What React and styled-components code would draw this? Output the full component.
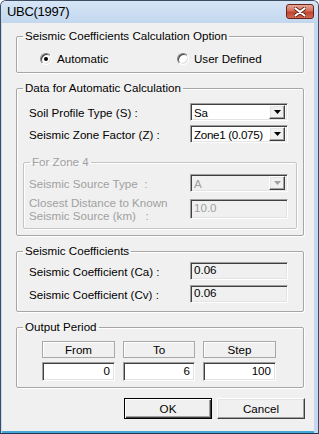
import React from 'react';
import styled, { createGlobalStyle, css } from 'styled-components';

const GlobalStyle = createGlobalStyle`
  body {
    margin: 0;
    font-family: "Liberation Sans", Arial, sans-serif;
    font-size: 11.6px;
    color: #000;
  }
`;

const sunken = css`
  box-sizing: border-box;
  border: 1px solid;
  border-color: #a0a0a0 #ffffff #ffffff #a0a0a0;
  box-shadow: inset 1px 1px 0 #404040, inset -1px -1px 0 #e3e3e3;
`;

const raised = css`
  box-sizing: border-box;
  border: 1px solid;
  border-color: #ffffff #404040 #404040 #ffffff;
  box-shadow: inset -1px -1px 0 #a0a0a0, inset 1px 1px 0 #e3e3e3;
`;

const Window = styled.div`
  box-sizing: border-box;
  width: 319px;
  height: 434px;
  display: flex;
  flex-direction: column;
  background: #c4d8ef;
  border: 1px solid #3d4d62;
  border-radius: 6px 6px 0 0;
  border-bottom-color: #1f3550;
  overflow: hidden;
`;

const TitleBar = styled.div`
  height: 22px;
  display: flex;
  justify-content: space-between;
  background: linear-gradient(#d6e5f6, #c2d7ee);
  padding-left: 6px;
`;

const Title = styled.span`
  font-size: 13px;
  line-height: 22px;
  letter-spacing: -0.3px;
`;

const CloseButton = styled.div`
  box-sizing: border-box;
  width: 28px;
  height: 15px;
  margin: 3px 4px 0 0;
  border: 1px solid #6b2218;
  border-radius: 3px;
  background: linear-gradient(#e6a898 0%, #d4705c 45%, #c0432e 55%, #d06a52 100%);
  display: flex;
  align-items: center;
  justify-content: center;
`;

const Client = styled.div`
  flex: 1;
  margin: 0 4px 0 1px;
  padding: 0 10px 0 14px;
  background: #f0f0f0;
  border-bottom: 2px solid #44a9d9;
  display: flex;
  flex-direction: column;
`;

const Group = styled.fieldset`
  margin: ${p => p.$top}px ${p => p.$side || 0}px ${p => p.$bottom || 0}px;
  padding: 0;
  border: 1px solid ${p => (p.$disabled ? '#c4c4c4' : '#a6a6a6')};
  border-radius: 2px;
  box-shadow: inset 1px 1px 0 #ffffff, 1px 1px 0 #ffffff;
  min-inline-size: 0;
`;

const Legend = styled.legend`
  margin-left: 6px;
  padding: 0 2px;
  line-height: 14px;
  color: ${p => (p.$disabled ? '#a0a0a0' : '#000')};
`;

const RadioRow = styled.div`
  display: grid;
  grid-template-columns: 137px auto;
  padding: 9px 0 6px 23px;
`;

const RadioItem = styled.label`
  display: flex;
  align-items: center;
  gap: 5px;
  height: 14px;
  line-height: 14px;
`;

const RadioCircle = styled.span`
  box-sizing: border-box;
  width: 12px;
  height: 12px;
  border-radius: 50%;
  border: 1px solid;
  border-color: #808080 #ffffff #ffffff #808080;
  box-shadow: inset 1px 1px 0 #404040, inset -1px -1px 0 #dcdcdc;
  background: #fff;
  display: flex;
  align-items: center;
  justify-content: center;

  &::after {
    content: '';
    width: 4px;
    height: 4px;
    border-radius: 50%;
    background: ${p => (p.$checked ? '#000' : 'transparent')};
  }
`;

const Rows = styled.div`
  display: flex;
  flex-direction: column;
  gap: ${p => p.$gap || 4}px;
  padding: ${p => p.$pad};
`;

const FieldRow = styled.div`
  display: flex;
  align-items: center;
  justify-content: space-between;
  min-height: 18px;
`;

const Label = styled.span`
  line-height: 13px;
  color: ${p => (p.$disabled ? '#a0a0a0' : '#000')};
`;

const Combo = styled.div`
  ${sunken};
  width: 98px;
  height: 18px;
  display: flex;
  align-items: center;
  padding: 2px 2px 2px 3px;
  background: ${p => (p.$disabled ? '#f0f0f0' : '#fff')};
  color: ${p => (p.$disabled ? '#a0a0a0' : '#000')};
`;

const ComboText = styled.span`
  flex: 1;
  white-space: nowrap;
  overflow: hidden;
  letter-spacing: -0.3px;
`;

const DropButton = styled.span`
  ${raised};
  flex: none;
  width: 16px;
  height: 14px;
  background: #f0f0f0;
  display: flex;
  align-items: center;
  justify-content: center;
`;

const TextBox = styled.div`
  ${sunken};
  width: 98px;
  height: ${p => p.$h || 18}px;
  line-height: ${p => (p.$h || 18) - 4}px;
  padding: 0 3px;
  background: #f0f0f0;
  color: ${p => (p.$disabled ? '#a0a0a0' : '#000')};
`;

const PeriodGrid = styled.div`
  display: grid;
  grid-template-columns: 73px 72px 73px;
  column-gap: 8px;
  row-gap: 4px;
  padding: 7px 0 6px 25px;
`;

const HeaderCell = styled.div`
  box-sizing: border-box;
  height: 17px;
  line-height: 15px;
  text-align: center;
  border: 1px solid #a8a8a8;
  box-shadow: inset 1px 1px 0 #ffffff;
  background: #f0f0f0;
`;

const NumberBox = styled.div`
  ${sunken};
  height: 19px;
  line-height: 16px;
  text-align: right;
  padding-right: 4px;
  background: #fff;
`;

const ButtonRow = styled.div`
  display: flex;
  justify-content: flex-end;
  gap: 5px;
  margin: 10px -1px 0 0;
`;

const DialogButton = styled.div`
  ${raised};
  width: 88px;
  height: 21px;
  line-height: 19px;
  text-align: center;
  background: #f0f0f0;
  ${p =>
    p.$default &&
    css`
      border: 1px solid #000;
      box-shadow: inset 1px 1px 0 #ffffff, inset -1px -1px 0 #404040,
        inset -2px -2px 0 #a0a0a0;
    `}
`;

const Arrow = ({ disabled }) => (
  <svg width="7" height="4" viewBox="0 0 7 4">
    <path d="M0 0h7L3.5 4z" fill={disabled ? '#a0a0a0' : '#000'} />
  </svg>
);

const CloseGlyph = () => (
  <svg width="12" height="10" viewBox="0 0 12 10">
    <path
      d="M1.5 1.5L10.5 8.5M10.5 1.5L1.5 8.5"
      stroke="#5a1a12"
      strokeWidth="3.6"
      strokeLinecap="round"
    />
    <path
      d="M1.5 1.5L10.5 8.5M10.5 1.5L1.5 8.5"
      stroke="#ffffff"
      strokeWidth="2.2"
      strokeLinecap="round"
    />
  </svg>
);

const ComboBox = ({ value, disabled }) => (
  <Combo $disabled={disabled}>
    <ComboText>{value}</ComboText>
    <DropButton>
      <Arrow disabled={disabled} />
    </DropButton>
  </Combo>
);

const periods = [
  { name: 'From', value: '0' },
  { name: 'To', value: '6' },
  { name: 'Step', value: '100' },
];

export default function App() {
  return (
    <>
      <GlobalStyle />
      <Window>
        <TitleBar>
          <Title>UBC(1997)</Title>
          <CloseButton>
            <CloseGlyph />
          </CloseButton>
        </TitleBar>
        <Client>
          <Group $top={6}>
            <Legend>Seismic Coefficients Calculation Option</Legend>
            <RadioRow>
              <RadioItem>
                <RadioCircle $checked />
                Automatic
              </RadioItem>
              <RadioItem>
                <RadioCircle />
                User Defined
              </RadioItem>
            </RadioRow>
          </Group>

          <Group $top={8}>
            <Legend>Data for Automatic Calculation</Legend>
            <Rows $pad="8px 15px 0 12px">
              <FieldRow>
                <Label>Soil Profile Type (S) :</Label>
                <ComboBox value="Sa" />
              </FieldRow>
              <FieldRow>
                <Label>Seismic Zone Factor (Z) :</Label>
                <ComboBox value="Zone1 (0.075)" />
              </FieldRow>
            </Rows>
            <Group $top={12} $side={6} $bottom={6} $disabled>
              <Legend $disabled>For Zone 4</Legend>
              <Rows $pad="5px 8px 6px 5px">
                <FieldRow>
                  <Label $disabled>Seismic Source Type&nbsp;&nbsp;:</Label>
                  <ComboBox value="A" disabled />
                </FieldRow>
                <FieldRow>
                  <Label $disabled>
                    Closest Distance to Known
                    <br />
                    Seismic Source (km)&nbsp;&nbsp;&nbsp;:
                  </Label>
                  <TextBox $disabled $h={20}>10.0</TextBox>
                </FieldRow>
              </Rows>
            </Group>
          </Group>

          <Group $top={8}>
            <Legend>Seismic Coefficients</Legend>
            <Rows $pad="4px 15px 8px 12px" $gap={5}>
              <FieldRow>
                <Label>Seismic Coefficient (Ca) :</Label>
                <TextBox>0.06</TextBox>
              </FieldRow>
              <FieldRow>
                <Label>Seismic Coefficient (Cv) :</Label>
                <TextBox>0.06</TextBox>
              </FieldRow>
            </Rows>
          </Group>

          <Group $top={8}>
            <Legend>Output Period</Legend>
            <PeriodGrid>
              {periods.map(p => (
                <HeaderCell key={p.name}>{p.name}</HeaderCell>
              ))}
              {periods.map(p => (
                <NumberBox key={p.name}>{p.value}</NumberBox>
              ))}
            </PeriodGrid>
          </Group>

          <ButtonRow>
            <DialogButton $default>OK</DialogButton>
            <DialogButton>Cancel</DialogButton>
          </ButtonRow>
        </Client>
      </Window>
    </>
  );
}
